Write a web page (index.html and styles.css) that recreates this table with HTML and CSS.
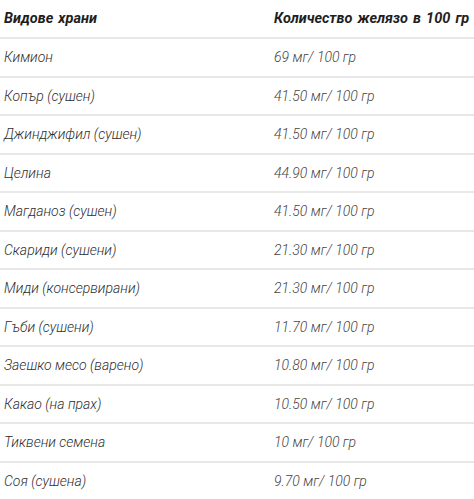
FILE: index.html
```html
<!DOCTYPE html>
<html lang="bg">
<head>
<meta charset="utf-8">
<link rel="stylesheet" href="styles.css">
</head>
<body>
<table class="iron">
<thead>
<tr><th class="c1">Видове храни</th><th class="c2">Количество желязо в 100 гр</th></tr>
</thead>
<tbody>
<tr><td class="c1">Кимион</td><td class="c2">69 мг/ 100 гр</td></tr>
<tr><td class="c1">Копър (сушен)</td><td class="c2">41.50 мг/ 100 гр</td></tr>
<tr><td class="c1">Джинджифил (сушен)</td><td class="c2">41.50 мг/ 100 гр</td></tr>
<tr><td class="c1">Целина</td><td class="c2">44.90 мг/ 100 гр</td></tr>
<tr><td class="c1">Магданоз (сушен)</td><td class="c2">41.50 мг/ 100 гр</td></tr>
<tr><td class="c1">Скариди (сушени)</td><td class="c2">21.30 мг/ 100 гр</td></tr>
<tr><td class="c1">Миди (консервирани)</td><td class="c2">21.30 мг/ 100 гр</td></tr>
<tr><td class="c1">Гъби (сушени)</td><td class="c2">11.70 мг/ 100 гр</td></tr>
<tr><td class="c1">Заешко месо (варено)</td><td class="c2">10.80 мг/ 100 гр</td></tr>
<tr><td class="c1">Какао (на прах)</td><td class="c2">10.50 мг/ 100 гр</td></tr>
<tr><td class="c1">Тиквени семена</td><td class="c2">10 мг/ 100 гр</td></tr>
<tr><td class="c1">Соя (сушена)</td><td class="c2">9.70 мг/ 100 гр</td></tr>
</tbody>
</table>
</body>
</html>
```

FILE: styles.css
```css
html, body {
  margin: 0;
  padding: 0;
  background: #fff;
}
body {
  font-family: Roboto, "Liberation Sans", sans-serif;
  font-style: italic;
  font-size: 14px;
  overflow: hidden;
}
.iron {
  width: 474px;
  border-collapse: collapse;
  table-layout: fixed;
}
.iron th, .iron td {
  text-align: left;
  padding: 0;
  border-bottom: 2px solid #e8e8e8;
  white-space: nowrap;
}
.iron th {
  height: 37px;
  font-size: 14.5px;
  word-spacing: 1.5px;
  font-weight: 700;
  color: #1e1e1e;
}
.iron td {
  height: 36.5px;
  font-weight: 300;
  color: #2e2e2e;
}
.iron .c1 {
  width: 270px;
  padding-left: 4px;
}
.iron td.c2 {
  color: #444;
}
```
